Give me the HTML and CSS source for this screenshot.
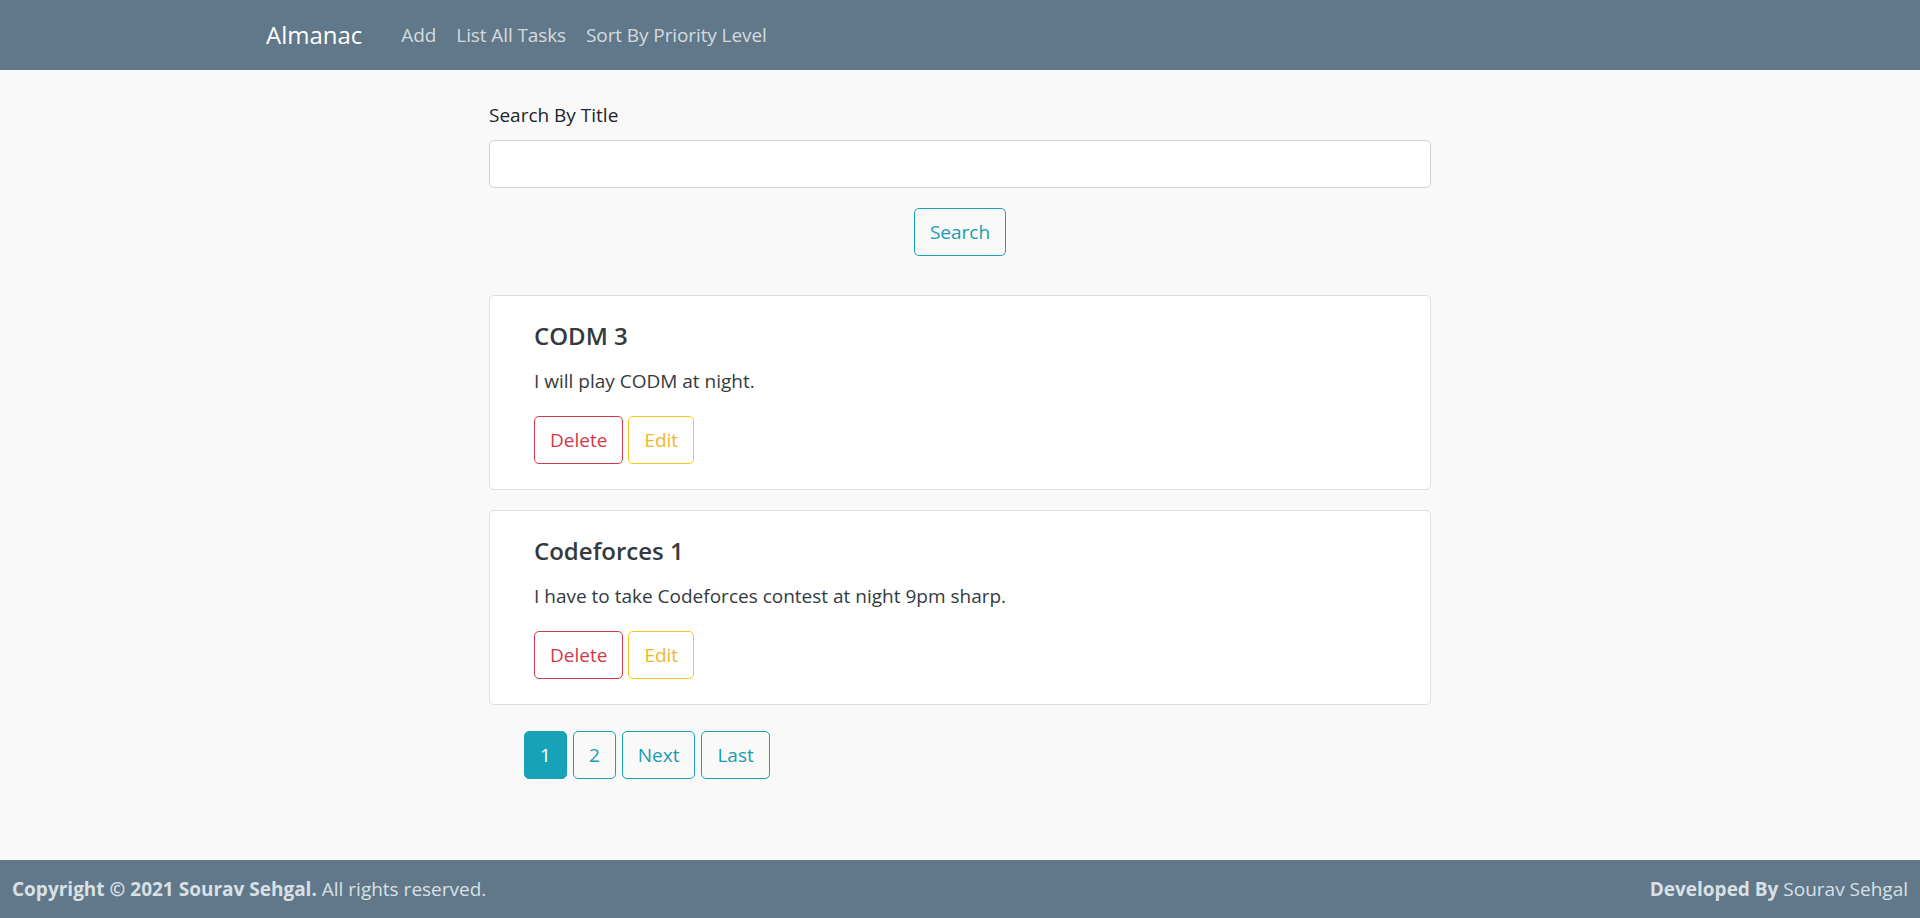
FILE: index.html
```html
<!DOCTYPE html>
<html lang="en">
<head>
<meta charset="utf-8">
<title>Almanac</title>
<link rel="stylesheet" href="styles.css">
</head>
<body>
<nav class="navbar">
  <div class="nav-inner">
    <a class="brand" href="#">Almanac</a>
    <ul class="nav-links">
      <li><a href="#">Add</a></li>
      <li><a href="#">List All Tasks</a></li>
      <li><a href="#">Sort By Priority Level</a></li>
    </ul>
  </div>
</nav>

<main class="main">
  <form class="search-form">
    <div class="form-group">
      <label class="form-label" for="title">Search By Title</label>
      <input class="form-input" id="title" type="text">
    </div>
    <div class="form-actions">
      <button class="btn btn-info" type="button">Search</button>
    </div>
  </form>

  <div class="cards">
    <div class="card">
      <h5 class="card-title">CODM 3</h5>
      <p class="card-text">I will play CODM at night.</p>
      <div class="card-actions">
        <button class="btn btn-danger" type="button">Delete</button>
        <button class="btn btn-warning" type="button">Edit</button>
      </div>
    </div>
    <div class="card">
      <h5 class="card-title">Codeforces 1</h5>
      <p class="card-text">I have to take Codeforces contest at night 9pm sharp.</p>
      <div class="card-actions">
        <button class="btn btn-danger" type="button">Delete</button>
        <button class="btn btn-warning" type="button">Edit</button>
      </div>
    </div>
  </div>

  <div class="pager">
    <button class="btn btn-info active" type="button">1</button>
    <button class="btn btn-info" type="button">2</button>
    <button class="btn btn-info" type="button">Next</button>
    <button class="btn btn-info" type="button">Last</button>
  </div>
</main>

<footer class="footer">
  <div><b>Copyright © 2021 Sourav Sehgal.</b> All rights reserved.</div>
  <div><b>Developed By</b> Sourav Sehgal</div>
</footer>
</body>
</html>
```

FILE: styles.css
```css
* {
  box-sizing: border-box;
}

html, body {
  margin: 0;
  padding: 0;
}

body {
  min-height: 100vh;
  display: flex;
  flex-direction: column;
  background: #f9f9f9;
  font-family: "Open Sans", "Noto Sans", sans-serif;
  font-size: 19px;
  line-height: 30px;
  color: #212529;
}

a {
  text-decoration: none;
}

/* Navbar */
.navbar {
  height: 70px;
  background: #607889;
  flex-shrink: 0;
}

.nav-inner {
  max-width: 1388px;
  height: 100%;
  margin: 0 auto;
  display: flex;
  align-items: center;
}

.brand {
  color: #ffffff;
  font-size: 24px;
  line-height: 30px;
  margin-right: 29px;
}

.nav-links {
  display: flex;
  list-style: none;
  margin: 0;
  padding: 0;
}

.nav-links a {
  display: block;
  padding: 0 10px;
  color: rgba(255, 255, 255, 0.74);
  font-size: 19px;
  letter-spacing: -0.1px;
}

/* Main */
.main {
  flex: 1;
  width: 942px;
  margin: 0 auto;
  padding-top: 30px;
}

.form-group {
  margin-bottom: 20px;
}

.form-label {
  display: block;
  margin-bottom: 10px;
  color: #212529;
}

.form-input {
  display: block;
  width: 100%;
  height: 48px;
  border: 1px solid #ced4da;
  border-radius: 5px;
  background: #fff;
  font: inherit;
  padding: 0 15px;
}

.form-actions {
  display: flex;
  justify-content: center;
}

.btn {
  font: inherit;
  line-height: 30px;
  padding: 8px 15px;
  border-radius: 5px;
  background: transparent;
  border: 1px solid currentColor;
  cursor: pointer;
}

.btn-info {
  color: #1a9cb0;
  border-color: #17a2b8;
}

.btn-info.active {
  background: #17a2b8;
  color: #fff;
}

.btn-danger {
  color: #d03a48;
  border-color: #d63a49;
}

.btn-warning {
  color: #f2b529;
  border-color: #fbc51d;
}

.cards {
  margin-top: 39px;
  display: flex;
  flex-direction: column;
  gap: 20px;
}

.card {
  background: #fff;
  border: 1px solid #dfdfdf;
  border-radius: 5px;
  padding: 25px 44px 25px 44px;
}

.card-title {
  margin: 0 0 15px;
  font-size: 24px;
  line-height: 30px;
  font-weight: 600;
  color: #343a40;
}

.card-text {
  margin: 0 0 20px;
  color: #343a40;
}

.card-actions {
  display: flex;
  gap: 5px;
}

.pager {
  margin-top: 26px;
  padding-left: 35px;
  display: flex;
  gap: 6px;
}

/* Footer */
.footer {
  height: 58px;
  flex-shrink: 0;
  background: #607889;
  color: #d9e0e5;
  display: flex;
  align-items: center;
  justify-content: space-between;
  padding: 0 12px;
}

.footer b {
  font-weight: 700;
}
```
